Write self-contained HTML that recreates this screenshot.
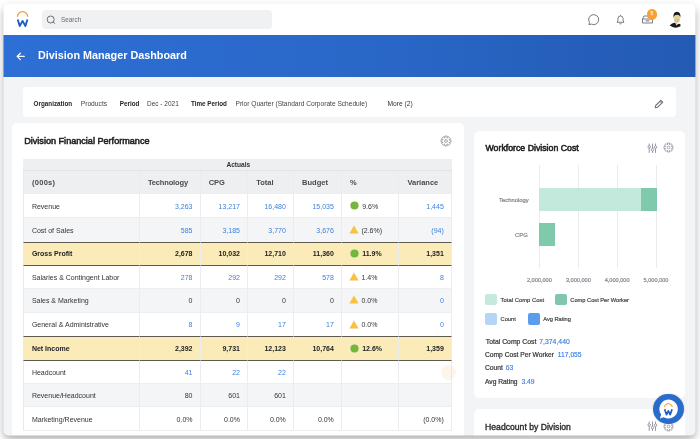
<!DOCTYPE html>
<html><head><meta charset="utf-8">
<style>
*{box-sizing:border-box;margin:0;padding:0}
html,body{width:700px;height:439px;overflow:hidden;background:#fff;font-family:"Liberation Sans",sans-serif}
.abs{position:absolute}
#shadow{position:absolute;left:3.5px;top:3.6px;width:691.9px;height:431.9px;border-radius:5px;background:#f3f4f6;box-shadow:0 4px 8px rgba(0,0,0,.34)}
#win{position:absolute;left:0;top:0;width:700px;height:439px;will-change:transform;clip-path:inset(3.6px 4.6px 3.5px 3.5px round 5px);background:#f3f4f6}
#topbar{left:0;top:0;width:700px;height:34.6px;background:#fff}
#blue{left:0;top:34.6px;width:700px;height:42px;background:linear-gradient(90deg,#2d6fd5 0%,#2a68c8 50%,#235ab4 100%)}
.t{position:absolute;white-space:nowrap;line-height:1}
.med{-webkit-text-stroke:0.55px #222}
.card{position:absolute;background:#fff;border-radius:5px}
table{border-collapse:separate;border-spacing:0;position:absolute;table-layout:fixed}
td{height:23.7px;line-height:12px;font-size:7px;color:#333;padding:2px 8px 0 8px;border-right:1px solid #ebecef;border-bottom:1px solid #eceef0;white-space:nowrap}
td.n{text-align:right;padding-right:7.2px}
td:first-child{padding-left:7.6px;border-left:1px solid #e9eaed}
.b{color:#3d80e0}
tr.g td{background:#f4f5f7}
tr.w td{background:#fff}
tr.y td{background:#faebb9;font-weight:bold;color:#222;padding-top:1px;border-top:1px solid #5e5a52;border-bottom:none}
tr.ay td{border-top:1px solid #5e5a52}
tr.by td{border-bottom:none}
tr.h td{background:#eeeff1;font-weight:bold;color:#4a4a4a;font-size:7.5px;padding-top:2px}
.dot{display:inline-block;vertical-align:-1.6px;margin-right:3.2px}
.tri{display:inline-block;vertical-align:-1.2px;margin-right:2.4px;margin-left:-1px}
</style></head><body>
<div id="shadow"></div>
<div id="win">
  <div id="topbar" class="abs"></div>
  <!-- logo -->
  <svg class="abs" style="left:12px;top:8px" width="22" height="22" viewBox="0 0 22 22">
    <path d="M5.45 8.7 A5.1 5.1 0 0 1 15.65 8.7" fill="none" stroke="#f0962e" stroke-width="1.25"/>
    <path d="M5.7 11.4 L7.7 18.1 L10.55 12.9 L13.4 18.1 L15.4 11.4" fill="none" stroke="#1e5ec0" stroke-width="1.9" stroke-linejoin="round" stroke-linecap="butt"/>
  </svg>
  <div class="abs" style="left:41.6px;top:9.6px;width:230.6px;height:19px;background:#f0f1f3;border-radius:4px"></div>
  <svg class="abs" style="left:46px;top:14.5px" width="10" height="10" viewBox="0 0 10 10">
    <circle cx="4.7" cy="4.5" r="3.5" fill="none" stroke="#5f6368" stroke-width="0.9"/>
    <path d="M7.2 7 L8.6 8.4" stroke="#5f6368" stroke-width="0.95" stroke-linecap="round"/>
  </svg>
  <div class="t" style="left:61px;top:16.7px;font-size:6.4px;color:#6b6b6b">Search</div>
  <!-- right icons -->
  <svg class="abs" style="left:586px;top:13px" width="14" height="13" viewBox="0 0 14 13">
    <path d="M2.9 11.6 L3.5 9.4 A5 5 0 1 1 5.4 11.1 Z" fill="none" stroke="#6b7079" stroke-width="0.95" stroke-linejoin="round"/>
  </svg>
  <svg class="abs" style="left:614.5px;top:13.5px" width="11" height="11" viewBox="0 0 11 11">
    <path d="M2 8.3 L2.9 7 L2.9 4.6 A2.6 2.6 0 0 1 8.1 4.6 L8.1 7 L9 8.3 Z" fill="none" stroke="#6b7079" stroke-width="0.9" stroke-linejoin="round"/>
    <path d="M4.5 9.3 A1.1 1.1 0 0 0 6.5 9.3 M5.5 0.9 V1.9" fill="none" stroke="#6b7079" stroke-width="0.9"/>
  </svg>
  <svg class="abs" style="left:641px;top:15px" width="13" height="9" viewBox="0 0 13 9">
    <path d="M1.5 4 L3 1 L10 1 L11.5 4 L11.5 8 L1.5 8 Z M1.5 4 L11.5 4" fill="none" stroke="#6b7079" stroke-width="0.9" stroke-linejoin="round"/>
    <path d="M4.6 5.9 L8.4 5.9" stroke="#6b7079" stroke-width="1"/>
  </svg>
  <div class="abs" style="left:646.6px;top:9.3px;width:10.4px;height:10.4px;border-radius:50%;background:#f5a136"></div>
  <div class="t" style="left:650.6px;top:12.3px;font-size:4.5px;color:#fff;font-weight:bold">5</div>
  <!-- avatar -->
  <svg class="abs" style="left:664px;top:8px" width="22" height="22" viewBox="0 0 22 22">
    <path d="M5.6 17.4 Q8.5 14.2 11.5 14.8 L13.5 16.2 Q15.5 15 16.6 16.8 L16.4 18.2 Q12.5 20.6 8.6 19 Z" fill="#1c1c1c"/>
    <path d="M11 14.9 L12.8 17.5 L13.8 16 Z" fill="#f4f4f4"/>
    <ellipse cx="12.9" cy="10.2" rx="3.3" ry="4.5" fill="#e3d29d"/>
    <ellipse cx="12.9" cy="12.4" rx="2.2" ry="2" fill="#d9c08e"/>
    <path d="M9.4 9.8 Q9 4 12.9 3.8 Q16.8 4 16.5 9.5 Q15.8 6.6 12.9 6.7 Q10.2 6.7 9.4 9.8Z" fill="#1a1a1a"/>
  </svg>

  <div id="blue" class="abs"></div>
  <svg class="abs" style="left:16px;top:51.5px" width="9" height="9" viewBox="0 0 9 9">
    <path d="M8.2 4.4 L1.2 4.4 M4.4 1.2 L1.1 4.4 L4.4 7.6" fill="none" stroke="#fff" stroke-width="1.2" stroke-linecap="round" stroke-linejoin="round"/>
  </svg>
  <div class="t" style="left:38px;top:50.4px;font-size:10.8px;font-weight:bold;color:#fff">Division Manager Dashboard</div>

  <!-- filter bar -->
  <div class="card" style="left:23px;top:87px;width:652.8px;height:30px;border-radius:4px"></div>
  <div class="t" style="left:33.6px;top:101px;font-size:6.3px;font-weight:bold;color:#222">Organization</div>
  <div class="t" style="left:80.7px;top:101px;font-size:6.7px;color:#444">Products</div>
  <div class="t" style="left:119.8px;top:101px;font-size:6.3px;font-weight:bold;color:#222">Period</div>
  <div class="t" style="left:147px;top:101px;font-size:6.5px;color:#444">Dec - 2021</div>
  <div class="t" style="left:191px;top:101px;font-size:6.3px;font-weight:bold;color:#222">Time Period</div>
  <div class="t" style="left:235.5px;top:101px;font-size:6.6px;color:#444">Prior Quarter (Standard Corporate Schedule)</div>
  <div class="t" style="left:387.4px;top:101px;font-size:6.7px;color:#333">More (2)</div>
  <svg class="abs" style="left:654px;top:99px" width="10" height="10" viewBox="0 0 10 10">
    <path d="M1.3 8.7 L1.7 6.5 L6.9 1.3 L8.7 3.1 L3.5 8.3 Z" fill="none" stroke="#6b7079" stroke-width="1.1" stroke-linejoin="round"/>
    <path d="M5.9 2.3 L7.7 4.1" stroke="#6b7079" stroke-width="1"/>
  </svg>

  <!-- left card -->
  <div class="card" style="left:11.8px;top:122.7px;width:452px;height:330px"></div>
  <div class="t med" style="left:24.2px;top:137.2px;font-size:9.1px;color:#222">Division Financial Performance</div>
  <svg class="abs" style="left:439.5px;top:135px" width="12" height="12" viewBox="0 0 12 12">
    <circle cx="6" cy="6" r="1.4" fill="none" stroke="#8a8f99" stroke-width="0.8"/>
    <path d="M4.82 2.86 L4.82 1.19 L4.82 1.19 L5.41 1.09 L6.00 1.05 L6.59 1.09 L7.18 1.19 L7.18 2.86 L7.23 2.88 L7.28 2.91 L7.33 2.93 L7.38 2.95 L8.57 1.77 L8.57 1.77 L9.06 2.11 L9.50 2.50 L9.89 2.94 L10.23 3.43 L9.05 4.62 L9.07 4.67 L9.09 4.72 L9.12 4.77 L9.14 4.82 L10.81 4.82 L10.81 4.82 L10.91 5.41 L10.95 6.00 L10.91 6.59 L10.81 7.18 L9.14 7.18 L9.12 7.23 L9.09 7.28 L9.07 7.33 L9.05 7.38 L10.23 8.57 L10.23 8.57 L9.89 9.06 L9.50 9.50 L9.06 9.89 L8.57 10.23 L7.38 9.05 L7.33 9.07 L7.28 9.09 L7.23 9.12 L7.18 9.14 L7.18 10.81 L7.18 10.81 L6.59 10.91 L6.00 10.95 L5.41 10.91 L4.82 10.81 L4.82 9.14 L4.77 9.12 L4.72 9.09 L4.67 9.07 L4.62 9.05 L3.43 10.23 L3.43 10.23 L2.94 9.89 L2.50 9.50 L2.11 9.06 L1.77 8.57 L2.95 7.38 L2.93 7.33 L2.91 7.28 L2.88 7.23 L2.86 7.18 L1.19 7.18 L1.19 7.18 L1.09 6.59 L1.05 6.00 L1.09 5.41 L1.19 4.82 L2.86 4.82 L2.88 4.77 L2.91 4.72 L2.93 4.67 L2.95 4.62 L1.77 3.43 L1.77 3.43 L2.11 2.94 L2.50 2.50 L2.94 2.11 L3.43 1.77 L4.62 2.95 L4.67 2.93 L4.72 2.91 L4.77 2.88 Z" fill="none" stroke="#8a8f99" stroke-width="0.95" stroke-linejoin="round"/>
  </svg>

  <div class="abs" style="left:23.3px;top:158.5px;width:428.7px;height:12px;background:#eeeff1;border-bottom:1px solid #e2e3e6"></div>
  <div class="t" style="left:226.4px;top:161.5px;font-size:6.6px;font-weight:bold;color:#333">Actuals</div>
  <table style="left:23.3px;top:170.5px;width:428.7px">
    <colgroup><col style="width:116.4px"><col style="width:60.7px"><col style="width:47.4px"><col style="width:45.8px"><col style="width:47.9px"><col style="width:57.3px"><col style="width:52.4px"></colgroup>
    <tr class="h"><td style="letter-spacing:0.3px">(000s)</td><td style="letter-spacing:-0.15px">Technology</td><td>CPG</td><td>Total</td><td>Budget</td><td>%</td><td>Variance</td></tr>
    <tr class="w"><td>Revenue</td><td class="n b">3,263</td><td class="n b">13,217</td><td class="n b">16,480</td><td class="n b">15,035</td><td><svg class="dot" width="9" height="9" viewBox="0 0 9 9"><circle cx="4.5" cy="4.5" r="4.1" fill="#74b63e"/></svg>9.6%</td><td class="n b">1,445</td></tr>
    <tr class="g by"><td>Cost of Sales</td><td class="n b">585</td><td class="n b">3,185</td><td class="n b">3,770</td><td class="n b">3,676</td><td><svg class="tri" width="10" height="9" viewBox="0 0 10 9"><path d="M5 0.6 L9.6 8.4 L0.4 8.4Z" fill="#f5c242"/></svg>(2.6%)</td><td class="n b">(94)</td></tr>
    <tr class="y"><td>Gross Profit</td><td class="n">2,678</td><td class="n">10,032</td><td class="n">12,710</td><td class="n">11,360</td><td><svg class="dot" width="9" height="9" viewBox="0 0 9 9"><circle cx="4.5" cy="4.5" r="4.1" fill="#74b63e"/></svg>11.9%</td><td class="n">1,351</td></tr>
    <tr class="w ay"><td>Salaries &amp; Contingent Labor</td><td class="n b">278</td><td class="n b">292</td><td class="n b">292</td><td class="n b">578</td><td><svg class="tri" width="10" height="9" viewBox="0 0 10 9"><path d="M5 0.6 L9.6 8.4 L0.4 8.4Z" fill="#f5c242"/></svg>1.4%</td><td class="n b">8</td></tr>
    <tr class="g"><td>Sales &amp; Marketing</td><td class="n">0</td><td class="n">0</td><td class="n">0</td><td class="n">0</td><td><svg class="tri" width="10" height="9" viewBox="0 0 10 9"><path d="M5 0.6 L9.6 8.4 L0.4 8.4Z" fill="#f5c242"/></svg>0.0%</td><td class="n b">0</td></tr>
    <tr class="w by"><td>General &amp; Administrative</td><td class="n b">8</td><td class="n b">9</td><td class="n b">17</td><td class="n b">17</td><td><svg class="tri" width="10" height="9" viewBox="0 0 10 9"><path d="M5 0.6 L9.6 8.4 L0.4 8.4Z" fill="#f5c242"/></svg>0.0%</td><td class="n b">0</td></tr>
    <tr class="y"><td>Net Income</td><td class="n">2,392</td><td class="n">9,731</td><td class="n">12,123</td><td class="n">10,764</td><td><svg class="dot" width="9" height="9" viewBox="0 0 9 9"><circle cx="4.5" cy="4.5" r="4.1" fill="#74b63e"/></svg>12.6%</td><td class="n">1,359</td></tr>
    <tr class="w ay"><td>Headcount</td><td class="n b">41</td><td class="n b">22</td><td class="n b">22</td><td></td><td></td><td></td></tr>
    <tr class="g"><td>Revenue/Headcount</td><td class="n">80</td><td class="n">601</td><td class="n">601</td><td></td><td></td><td></td></tr>
    <tr class="w"><td>Marketing/Revenue</td><td class="n">0.0%</td><td class="n">0.0%</td><td class="n">0.0%</td><td class="n">0.0%</td><td></td><td class="n">(0.0%)</td></tr>
  </table>
  <div class="abs" style="left:440.9px;top:364.5px;width:15.2px;height:15.2px;border-radius:50%;background:rgba(245,205,150,.2)"></div>

  <!-- right card -->
  <div class="card" style="left:474.3px;top:130.5px;width:210.8px;height:267px"></div>
  <div class="t med" style="left:485.5px;top:144.2px;font-size:8.75px;color:#222">Workforce Division Cost</div>
  <svg class="abs" style="left:647px;top:142.5px" width="11" height="11" viewBox="0 0 11 11">
    <path d="M2.2 0.5 V2.6 M2.2 5.2 V9.9 M5.5 0.5 V5.4 M5.5 8 V9.9 M8.5 0.5 V2.9 M8.5 5.5 V9.9" stroke="#8a8f99" stroke-width="0.9"/>
    <circle cx="2.2" cy="3.9" r="1.25" fill="none" stroke="#8a8f99" stroke-width="0.9"/>
    <circle cx="5.5" cy="6.7" r="1.25" fill="none" stroke="#8a8f99" stroke-width="0.9"/>
    <circle cx="8.5" cy="4.2" r="1.25" fill="none" stroke="#8a8f99" stroke-width="0.9"/>
  </svg>
  <svg class="abs" style="left:662.5px;top:142px" width="11" height="11" viewBox="0 0 12 12">
    <circle cx="6" cy="6" r="1.4" fill="none" stroke="#8a8f99" stroke-width="0.8"/>
    <path d="M4.82 2.86 L4.82 1.19 L4.82 1.19 L5.41 1.09 L6.00 1.05 L6.59 1.09 L7.18 1.19 L7.18 2.86 L7.23 2.88 L7.28 2.91 L7.33 2.93 L7.38 2.95 L8.57 1.77 L8.57 1.77 L9.06 2.11 L9.50 2.50 L9.89 2.94 L10.23 3.43 L9.05 4.62 L9.07 4.67 L9.09 4.72 L9.12 4.77 L9.14 4.82 L10.81 4.82 L10.81 4.82 L10.91 5.41 L10.95 6.00 L10.91 6.59 L10.81 7.18 L9.14 7.18 L9.12 7.23 L9.09 7.28 L9.07 7.33 L9.05 7.38 L10.23 8.57 L10.23 8.57 L9.89 9.06 L9.50 9.50 L9.06 9.89 L8.57 10.23 L7.38 9.05 L7.33 9.07 L7.28 9.09 L7.23 9.12 L7.18 9.14 L7.18 10.81 L7.18 10.81 L6.59 10.91 L6.00 10.95 L5.41 10.91 L4.82 10.81 L4.82 9.14 L4.77 9.12 L4.72 9.09 L4.67 9.07 L4.62 9.05 L3.43 10.23 L3.43 10.23 L2.94 9.89 L2.50 9.50 L2.11 9.06 L1.77 8.57 L2.95 7.38 L2.93 7.33 L2.91 7.28 L2.88 7.23 L2.86 7.18 L1.19 7.18 L1.19 7.18 L1.09 6.59 L1.05 6.00 L1.09 5.41 L1.19 4.82 L2.86 4.82 L2.88 4.77 L2.91 4.72 L2.93 4.67 L2.95 4.62 L1.77 3.43 L1.77 3.43 L2.11 2.94 L2.50 2.50 L2.94 2.11 L3.43 1.77 L4.62 2.95 L4.67 2.93 L4.72 2.91 L4.77 2.88 Z" fill="none" stroke="#8a8f99" stroke-width="0.95" stroke-linejoin="round"/>
  </svg>
  <!-- chart -->
  <div class="abs" style="left:539px;top:165.3px;width:1px;height:103px;background:#ebebeb"></div>
  <div class="abs" style="left:578.3px;top:165.3px;width:1px;height:103px;background:#ebebeb"></div>
  <div class="abs" style="left:617px;top:165.3px;width:1px;height:103px;background:#ebebeb"></div>
  <div class="abs" style="left:656.2px;top:165.3px;width:1px;height:103px;background:#ebebeb"></div>
  <div class="abs" style="left:539.3px;top:188.1px;width:101.6px;height:23px;background:#c2e9dc"></div>
  <div class="abs" style="left:640.9px;top:188.1px;width:15.7px;height:23px;background:#7fc9ad"></div>
  <div class="abs" style="left:539.3px;top:222.8px;width:15.7px;height:23px;background:#7fc9ad"></div>
  <div class="t" style="left:499px;top:198.1px;font-size:5.9px;color:#80858c;-webkit-text-stroke:0.2px #80858c">Technology</div>
  <div class="t" style="right:172.2px;top:232.8px;font-size:5.9px;color:#80858c;-webkit-text-stroke:0.2px #80858c">CPG</div>
  <div class="t" style="left:526.9px;top:277.6px;font-size:5.6px;color:#80858c;-webkit-text-stroke:0.2px #80858c">2,000,000</div>
  <div class="t" style="left:565.9px;top:277.6px;font-size:5.6px;color:#80858c;-webkit-text-stroke:0.2px #80858c">3,000,000</div>
  <div class="t" style="left:604.7px;top:277.6px;font-size:5.6px;color:#80858c;-webkit-text-stroke:0.2px #80858c">4,000,000</div>
  <div class="t" style="left:643.6px;top:277.6px;font-size:5.6px;color:#80858c;-webkit-text-stroke:0.2px #80858c">5,000,000</div>
  <!-- legend -->
  <div class="abs" style="left:485px;top:293.8px;width:12px;height:11.2px;border-radius:2px;background:#c5eadd"></div>
  <div class="t" style="left:500.6px;top:298.2px;font-size:5.9px;color:#444;-webkit-text-stroke:0.2px #444">Total Comp Cost</div>
  <div class="abs" style="left:555.2px;top:293.8px;width:12px;height:11.2px;border-radius:2px;background:#7fc8ad"></div>
  <div class="t" style="left:570.3px;top:298.2px;font-size:5.7px;color:#444;-webkit-text-stroke:0.2px #444">Comp Cost Per Worker</div>
  <div class="abs" style="left:485px;top:313px;width:12px;height:11.6px;border-radius:2px;background:#b5d5f8"></div>
  <div class="t" style="left:500.6px;top:317.1px;font-size:5.7px;color:#444;-webkit-text-stroke:0.2px #444">Count</div>
  <div class="abs" style="left:528.2px;top:313px;width:11.6px;height:11.6px;border-radius:2px;background:#5c9cef"></div>
  <div class="t" style="left:543.2px;top:317.1px;font-size:5.7px;color:#444;-webkit-text-stroke:0.2px #444">Avg Rating</div>
  <!-- stats -->
  <div class="t" style="left:485.8px;top:338.5px;font-size:6.85px;color:#333;-webkit-text-stroke:0.2px #333">Total Comp Cost <span style="color:#3d80e0;-webkit-text-stroke:0.15px #3d80e0;margin-left:1px">7,374,440</span></div>
  <div class="t" style="left:485px;top:352.1px;font-size:6.7px;color:#333;-webkit-text-stroke:0.2px #333">Comp Cost Per Worker <span style="color:#3d80e0;-webkit-text-stroke:0.15px #3d80e0;margin-left:2px">117,055</span></div>
  <div class="t" style="left:485px;top:365.2px;font-size:6.7px;color:#333;-webkit-text-stroke:0.2px #333">Count <span style="color:#3d80e0;-webkit-text-stroke:0.15px #3d80e0;margin-left:1px">63</span></div>
  <div class="t" style="left:485px;top:379.2px;font-size:6.7px;color:#333;-webkit-text-stroke:0.2px #333">Avg Rating <span style="color:#3d80e0;-webkit-text-stroke:0.15px #3d80e0;margin-left:2px">3.49</span></div>

  <!-- headcount card -->
  <div class="card" style="left:474.3px;top:409.2px;width:210.8px;height:60px"></div>
  <div class="t" style="left:485.1px;top:423px;font-size:8.65px;color:#2a2a2a;-webkit-text-stroke:0.35px #2a2a2a">Headcount by Division</div>
  <svg class="abs" style="left:647px;top:421px" width="11" height="11" viewBox="0 0 11 11">
    <path d="M2.2 0.5 V2.6 M2.2 5.2 V9.9 M5.5 0.5 V5.4 M5.5 8 V9.9 M8.5 0.5 V2.9 M8.5 5.5 V9.9" stroke="#8a8f99" stroke-width="0.9"/>
    <circle cx="2.2" cy="3.9" r="1.25" fill="none" stroke="#8a8f99" stroke-width="0.9"/>
    <circle cx="5.5" cy="6.7" r="1.25" fill="none" stroke="#8a8f99" stroke-width="0.9"/>
    <circle cx="8.5" cy="4.2" r="1.25" fill="none" stroke="#8a8f99" stroke-width="0.9"/>
  </svg>
  <svg class="abs" style="left:662.5px;top:421px" width="11" height="11" viewBox="0 0 12 12">
    <circle cx="6" cy="6" r="1.4" fill="none" stroke="#8a8f99" stroke-width="0.8"/>
    <path d="M4.82 2.86 L4.82 1.19 L4.82 1.19 L5.41 1.09 L6.00 1.05 L6.59 1.09 L7.18 1.19 L7.18 2.86 L7.23 2.88 L7.28 2.91 L7.33 2.93 L7.38 2.95 L8.57 1.77 L8.57 1.77 L9.06 2.11 L9.50 2.50 L9.89 2.94 L10.23 3.43 L9.05 4.62 L9.07 4.67 L9.09 4.72 L9.12 4.77 L9.14 4.82 L10.81 4.82 L10.81 4.82 L10.91 5.41 L10.95 6.00 L10.91 6.59 L10.81 7.18 L9.14 7.18 L9.12 7.23 L9.09 7.28 L9.07 7.33 L9.05 7.38 L10.23 8.57 L10.23 8.57 L9.89 9.06 L9.50 9.50 L9.06 9.89 L8.57 10.23 L7.38 9.05 L7.33 9.07 L7.28 9.09 L7.23 9.12 L7.18 9.14 L7.18 10.81 L7.18 10.81 L6.59 10.91 L6.00 10.95 L5.41 10.91 L4.82 10.81 L4.82 9.14 L4.77 9.12 L4.72 9.09 L4.67 9.07 L4.62 9.05 L3.43 10.23 L3.43 10.23 L2.94 9.89 L2.50 9.50 L2.11 9.06 L1.77 8.57 L2.95 7.38 L2.93 7.33 L2.91 7.28 L2.88 7.23 L2.86 7.18 L1.19 7.18 L1.19 7.18 L1.09 6.59 L1.05 6.00 L1.09 5.41 L1.19 4.82 L2.86 4.82 L2.88 4.77 L2.91 4.72 L2.93 4.67 L2.95 4.62 L1.77 3.43 L1.77 3.43 L2.11 2.94 L2.50 2.50 L2.94 2.11 L3.43 1.77 L4.62 2.95 L4.67 2.93 L4.72 2.91 L4.77 2.88 Z" fill="none" stroke="#8a8f99" stroke-width="0.95" stroke-linejoin="round"/>
  </svg>
  <!-- chat bubble -->
  <div class="abs" style="left:652.9px;top:393.6px;width:30.7px;height:30.7px;border-radius:50%;background:#2a6ccb;box-shadow:0 0 2px rgba(0,0,0,.2)"></div>
  <svg class="abs" style="left:657px;top:398px" width="22" height="22" viewBox="0 0 22 22">
    <path d="M11.3 1.55 A9.5 9.5 0 1 1 6.6 19.3 L2.9 20.5 L4.2 16.6 A9.5 9.5 0 0 1 11.3 1.55Z" fill="#fff"/>
    <path d="M7.3 9.1 A4.1 4.1 0 0 1 15.4 9.1" fill="none" stroke="#f0962e" stroke-width="1"/>
    <path d="M7.6 11.2 L9.55 16.7 L11.35 12.9 L13.15 16.7 L15.1 11.2" fill="none" stroke="#1f5cbf" stroke-width="1.7" stroke-linejoin="round" stroke-linecap="butt"/>
  </svg>
</div>
</body></html>
